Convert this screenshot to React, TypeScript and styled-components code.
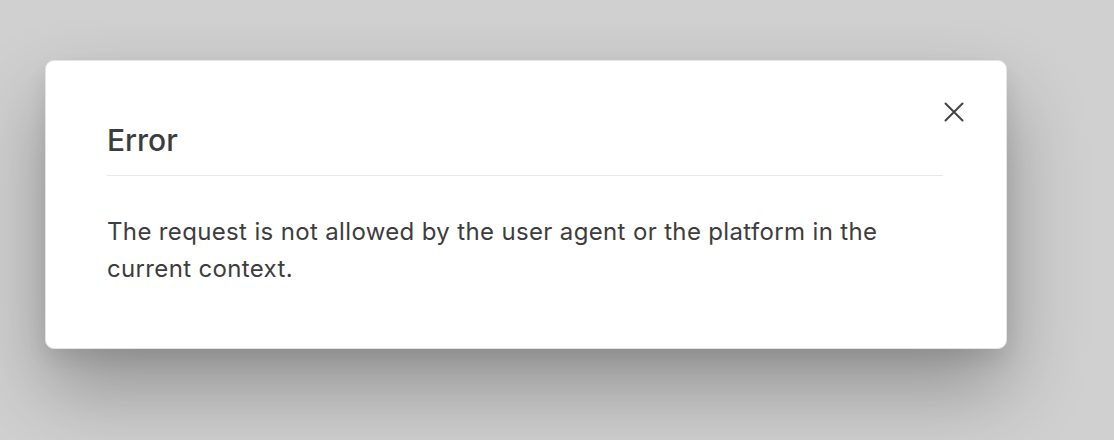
import styled, { createGlobalStyle } from 'styled-components';

const TEXT = '#3d3d3d';

const GlobalStyle = createGlobalStyle`
  html, body {
    margin: 0;
    padding: 0;
    background: #d0d0d0;
  }
  body {
    font-family: Inter, "Noto Sans", "Liberation Sans", sans-serif;
    color: ${TEXT};
    -webkit-font-smoothing: antialiased;
  }
`;

const Page = styled.div`
  width: 1114px;
  height: 440px;
  overflow: hidden;
  box-sizing: border-box;
  padding: 60px 0 0 45px;
`;

const Modal = styled.div`
  position: relative;
  width: 962px;
  box-sizing: border-box;
  padding: 61px 63px 61px 61px;
  background: #fff;
  border: 1px solid #e4e4e4;
  border-radius: 9px;
  box-shadow: 0 40px 80px rgba(0, 0, 0, 0.3), 0 10px 20px rgba(0, 0, 0, 0.08);
`;

const Title = styled.h2`
  margin: 0;
  font-size: 30px;
  line-height: 36px;
  font-weight: 500;
  color: ${TEXT};
`;

const Divider = styled.hr`
  margin: 17px 0 0 0;
  border: 0;
  border-top: 1px solid #e8e8e8;
`;

const Message = styled.p`
  margin: 37px 0 0 0;
  font-size: 24px;
  line-height: 37px;
  letter-spacing: 0.35px;
  font-weight: 400;
  color: ${TEXT};
  max-width: 800px;
`;

const CloseButton = styled.button`
  position: absolute;
  top: 33px;
  right: 34px;
  width: 36px;
  height: 36px;
  padding: 0;
  border: 0;
  background: transparent;
  display: flex;
  align-items: center;
  justify-content: center;
  cursor: pointer;
  color: #444;
`;

export default function App() {
  return (
    <>
      <GlobalStyle />
      <Page>
        <Modal>
          <CloseButton aria-label="Close">
            <svg width="22" height="22" viewBox="0 0 22 22" fill="none">
              <path d="M2.5 2.5L19.5 19.5M19.5 2.5L2.5 19.5" stroke="currentColor" strokeWidth="2" strokeLinecap="round" />
            </svg>
          </CloseButton>
          <Title>Error</Title>
          <Divider />
          <Message>
            The request is not allowed by the user agent or the platform in the current context.
          </Message>
        </Modal>
      </Page>
    </>
  );
}
